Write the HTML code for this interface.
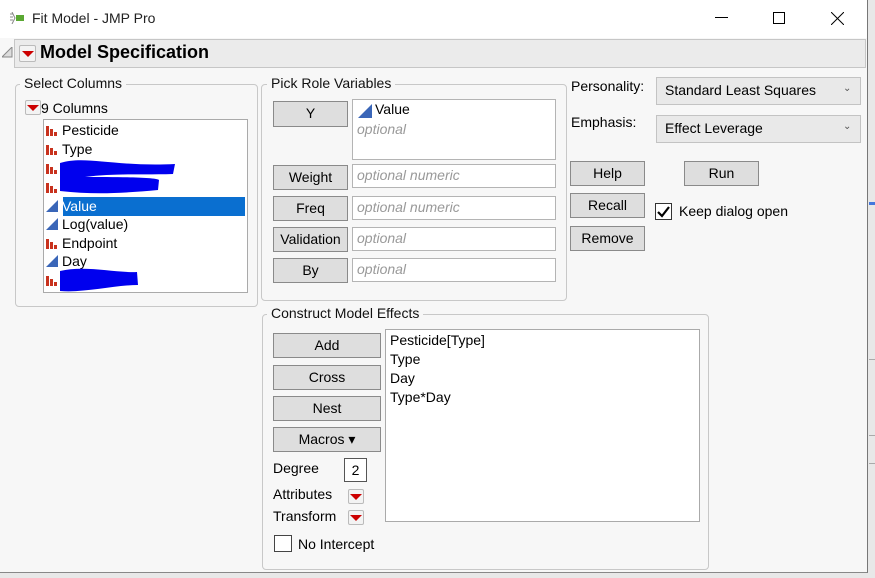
<!DOCTYPE html>
<html><head><meta charset="utf-8"><style>
*{box-sizing:border-box;margin:0;padding:0}
body{width:875px;height:578px;overflow:hidden;background:#e8e8e8;font-family:"Liberation Sans",sans-serif;font-size:14px;color:#000;position:relative}
.a{position:absolute}
.win{left:0;top:0;width:868px;height:573px;background:#f7f7f7;border-right:1px solid #777;border-bottom:1px solid #888}
.title{left:0;top:0;width:867px;height:38px;background:#fff}
.grp{border:1px solid #c8c8c8;border-radius:4px}
.lg{background:#f7f7f7;padding:0 4px;font-size:14px;color:#111}
.btn{background:#dedede;border:1px solid #8a8a8a;text-align:center;font-size:14px;line-height:23px}
.fld{background:#fff;border:1px solid #b4b4b4;color:#999;font-style:italic;font-size:14px;padding-left:4px;line-height:21px}
.li{left:46px;font-size:14px;height:19px;line-height:19px}
.bar{display:inline-block;width:12px;height:12px;vertical-align:-1px;margin-right:4px}
.dd{background:#e9e9e9;border:1px solid #c3c3c3;padding-left:8px;line-height:25px;font-size:14px}
.tri{width:0;height:0;border-left:6px solid transparent;border-right:6px solid transparent;border-top:6px solid #c00}
.pop{width:16px;height:15px;border:1px solid #bbb;border-radius:2px;background:#f3f3f3}
</style></head><body>
<div class="a win"></div>
<div class="a title"></div>
<svg class="a" style="left:10px;top:12px" width="16" height="12"><path d="M0 2h3M0 5h3M0 8h3M2 0l3 6-3 6" stroke="#888" fill="none"/><rect x="6" y="3" width="8" height="6" fill="#5aa832"/></svg>
<div class="a" style="left:32px;top:10px;font-size:14px;color:#222">Fit Model - JMP Pro</div>
<div class="a" style="left:715px;top:17px;width:13px;height:1px;background:#000"></div>
<div class="a" style="left:773px;top:12px;width:12px;height:12px;border:1px solid #000"></div>
<svg class="a" style="left:831px;top:12px" width="13" height="13"><path d="M0 0L13 13M13 0L0 13" stroke="#000"/></svg>
<div class="a" style="left:14px;top:39px;width:852px;height:29px;background:#ebebeb;border:1px solid #c6c6c6"></div>
<svg class="a" style="left:2px;top:47px" width="11" height="11"><path d="M10 0V10H0Z" fill="#ddd" stroke="#888"/></svg>
<div class="a pop" style="left:19px;top:45px;width:17px;height:17px"><div class="a tri" style="left:2px;top:5px"></div></div>
<div class="a" style="left:40px;top:42px;font-size:18px;font-weight:bold">Model Specification</div>

<div class="a grp" style="left:15px;top:84px;width:243px;height:223px"></div>
<div class="a lg" style="left:20px;top:75px">Select Columns</div>
<div class="a pop" style="left:25px;top:100px"><div class="a tri" style="left:1px;top:4px"></div></div>
<div class="a" style="left:41px;top:100px">9 Columns</div>
<div class="a" style="left:43px;top:119px;width:205px;height:174px;background:#fff;border:1px solid #aaa"></div>
<div class="a" style="left:63px;top:197px;width:182px;height:19px;background:#0a6fd0"></div>
<svg width="0" height="0" style="position:absolute"><defs>
<g id="b"><rect x="0" y="2" width="3" height="10" fill="#c8321e"/><rect x="4" y="5" width="3" height="7" fill="#c8321e"/><rect x="8" y="8" width="3" height="4" fill="#c8321e"/></g>
<g id="t"><path d="M0 12L12 0V12Z" fill="#3a66b8"/></g></defs></svg>
<div class="a li" style="top:121px"><svg class="bar"><use href="#b"/></svg>Pesticide</div>
<div class="a li" style="top:140px"><svg class="bar"><use href="#b"/></svg>Type</div>
<div class="a li" style="top:159px"><svg class="bar"><use href="#b"/></svg></div>
<div class="a li" style="top:178px"><svg class="bar"><use href="#b"/></svg></div>
<div class="a li" style="top:197px;color:#fff"><svg class="bar"><use href="#t"/></svg>Value</div>
<div class="a li" style="top:215px"><svg class="bar"><use href="#t"/></svg>Log(value)</div>
<div class="a li" style="top:234px"><svg class="bar"><use href="#b"/></svg>Endpoint</div>
<div class="a li" style="top:252px"><svg class="bar"><use href="#t"/></svg>Day</div>
<div class="a li" style="top:271px"><svg class="bar"><use href="#b"/></svg></div>
<svg class="a" style="left:55px;top:155px" width="130" height="140"><path d="M5 8C30 0 60 12 120 9L118 19C90 20 60 18 30 22C60 22 100 22 104 25L103 35C70 38 40 40 5 36Z" fill="#0000ee"/><path d="M5 116C30 110 60 118 82 117L83 130C60 130 30 138 5 136Z" fill="#0000ee"/></svg>

<div class="a grp" style="left:261px;top:84px;width:306px;height:217px"></div>
<div class="a lg" style="left:267px;top:75px">Pick Role Variables</div>
<div class="a btn" style="left:273px;top:101px;width:75px;height:26px">Y</div>
<div class="a" style="left:352px;top:99px;width:204px;height:61px;background:#fff;border:1px solid #b4b4b4"></div>
<svg class="a" style="left:358px;top:104px" width="14" height="14"><path d="M0 14L14 0V14Z" fill="#3a66b8"/></svg>
<div class="a" style="left:375px;top:101px">Value</div>
<div class="a" style="left:357px;top:121px;color:#999;font-style:italic">optional</div>
<div class="a btn" style="left:273px;top:165px;width:75px;height:25px">Weight</div>
<div class="a fld" style="left:352px;top:164px;width:204px;height:24px">optional numeric</div>
<div class="a btn" style="left:273px;top:196px;width:75px;height:25px">Freq</div>
<div class="a fld" style="left:352px;top:196px;width:204px;height:24px">optional numeric</div>
<div class="a btn" style="left:273px;top:227px;width:75px;height:25px">Validation</div>
<div class="a fld" style="left:352px;top:227px;width:204px;height:24px">optional</div>
<div class="a btn" style="left:273px;top:258px;width:75px;height:25px">By</div>
<div class="a fld" style="left:352px;top:258px;width:204px;height:24px">optional</div>

<div class="a" style="left:571px;top:78px">Personality:</div>
<div class="a dd" style="left:656px;top:77px;width:205px;height:28px">Standard Least Squares</div>
<div class="a" style="left:843px;top:83px;font-size:10px;color:#555">&#8964;</div>
<div class="a" style="left:571px;top:114px">Emphasis:</div>
<div class="a dd" style="left:656px;top:115px;width:205px;height:28px">Effect Leverage</div>
<div class="a" style="left:843px;top:121px;font-size:10px;color:#555">&#8964;</div>
<div class="a btn" style="left:570px;top:161px;width:75px;height:25px">Help</div>
<div class="a btn" style="left:684px;top:161px;width:75px;height:25px">Run</div>
<div class="a btn" style="left:570px;top:193px;width:75px;height:25px">Recall</div>
<div class="a btn" style="left:570px;top:226px;width:75px;height:25px">Remove</div>
<div class="a" style="left:655px;top:203px;width:17px;height:17px;border:1px solid #333;background:#fff"></div>
<svg class="a" style="left:657px;top:205px" width="13" height="13"><path d="M1 7L5 11L12 2" stroke="#000" stroke-width="2.2" fill="none"/></svg>
<div class="a" style="left:679px;top:203px">Keep dialog open</div>

<div class="a grp" style="left:262px;top:314px;width:447px;height:256px"></div>
<div class="a lg" style="left:267px;top:305px">Construct Model Effects</div>
<div class="a btn" style="left:273px;top:333px;width:108px;height:25px">Add</div>
<div class="a btn" style="left:273px;top:365px;width:108px;height:25px">Cross</div>
<div class="a btn" style="left:273px;top:396px;width:108px;height:25px">Nest</div>
<div class="a btn" style="left:273px;top:427px;width:108px;height:25px">Macros &#9662;</div>
<div class="a" style="left:273px;top:460px">Degree</div>
<div class="a" style="left:344px;top:458px;width:23px;height:24px;background:#fff;border:1px solid #555;text-align:center;line-height:22px">2</div>
<div class="a" style="left:273px;top:486px">Attributes</div>
<div class="a pop" style="left:348px;top:489px"><div class="a tri" style="left:1px;top:4px"></div></div>
<div class="a" style="left:273px;top:508px">Transform</div>
<div class="a pop" style="left:348px;top:510px"><div class="a tri" style="left:1px;top:4px"></div></div>
<div class="a" style="left:274px;top:535px;width:18px;height:17px;border:1px solid #444;background:#fff"></div>
<div class="a" style="left:298px;top:536px">No Intercept</div>
<div class="a" style="left:385px;top:329px;width:315px;height:193px;background:#fff;border:1px solid #aaa"></div>
<div class="a" style="left:390px;top:331px;line-height:19px">Pesticide[Type]<br>Type<br>Day<br>Type*Day</div>

<div class="a" style="left:869px;top:202px;width:6px;height:3px;background:#4477dd"></div>
<div class="a" style="left:869px;top:359px;width:6px;height:1px;background:#aaa"></div>
<div class="a" style="left:869px;top:435px;width:6px;height:1px;background:#aaa"></div>
<div class="a" style="left:869px;top:463px;width:6px;height:1px;background:#aaa"></div>
</body></html>
